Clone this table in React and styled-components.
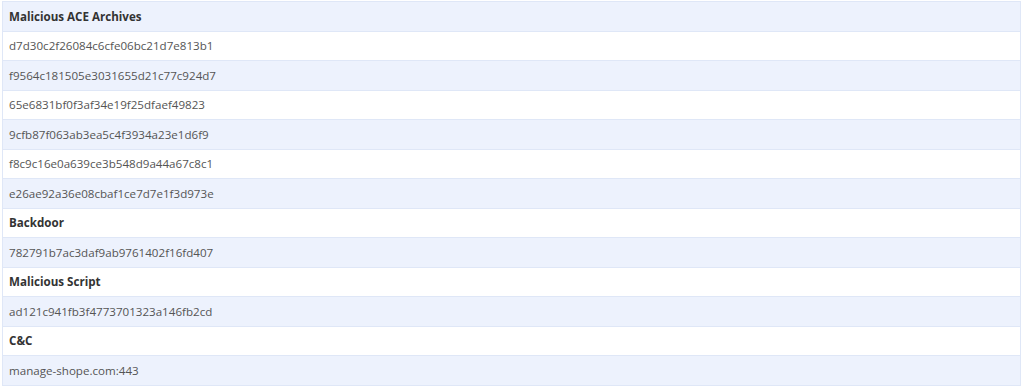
import React from "react";
import styled, { createGlobalStyle } from "styled-components";

const Global = createGlobalStyle`
  html, body { margin: 0; padding: 0; background: #ffffff; }
  body { padding: 1px 3px 0 2px; font-family: "Open Sans", "Noto Sans", sans-serif; }
`;

const Table = styled.div`
  display: flex;
  flex-direction: column;
  border: 1px solid #dfe7f7;
  border-bottom: none;
`;

const Row = styled.div`
  display: flex;
  align-items: center;
  height: 29.5px;
  box-sizing: border-box;
  padding: 0 6px;
  border-bottom: 1px solid #dfe7f7;
  background: ${(p) => (p.$shaded ? "#edf2fd" : "#ffffff")};
  font-size: 11.6px;
  color: ${(p) => (p.$head ? "#333333" : "#555555")};
  font-weight: ${(p) => (p.$head ? 700 : 400)};
`;

const rows = [
  { t: "Malicious ACE Archives", h: true },
  { t: "d7d30c2f26084c6cfe06bc21d7e813b1" },
  { t: "f9564c181505e3031655d21c77c924d7" },
  { t: "65e6831bf0f3af34e19f25dfaef49823" },
  { t: "9cfb87f063ab3ea5c4f3934a23e1d6f9" },
  { t: "f8c9c16e0a639ce3b548d9a44a67c8c1" },
  { t: "e26ae92a36e08cbaf1ce7d7e1f3d973e" },
  { t: "Backdoor", h: true },
  { t: "782791b7ac3daf9ab9761402f16fd407" },
  { t: "Malicious Script", h: true },
  { t: "ad121c941fb3f4773701323a146fb2cd" },
  { t: "C&C", h: true },
  { t: "manage-shope.com:443" },
];

export default function App() {
  return (
    <>
      <Global />
      <Table>
        {rows.map((r, i) => (
          <Row key={i} $head={r.h} $shaded={i % 2 === 0}>
            {r.t}
          </Row>
        ))}
      </Table>
    </>
  );
}
